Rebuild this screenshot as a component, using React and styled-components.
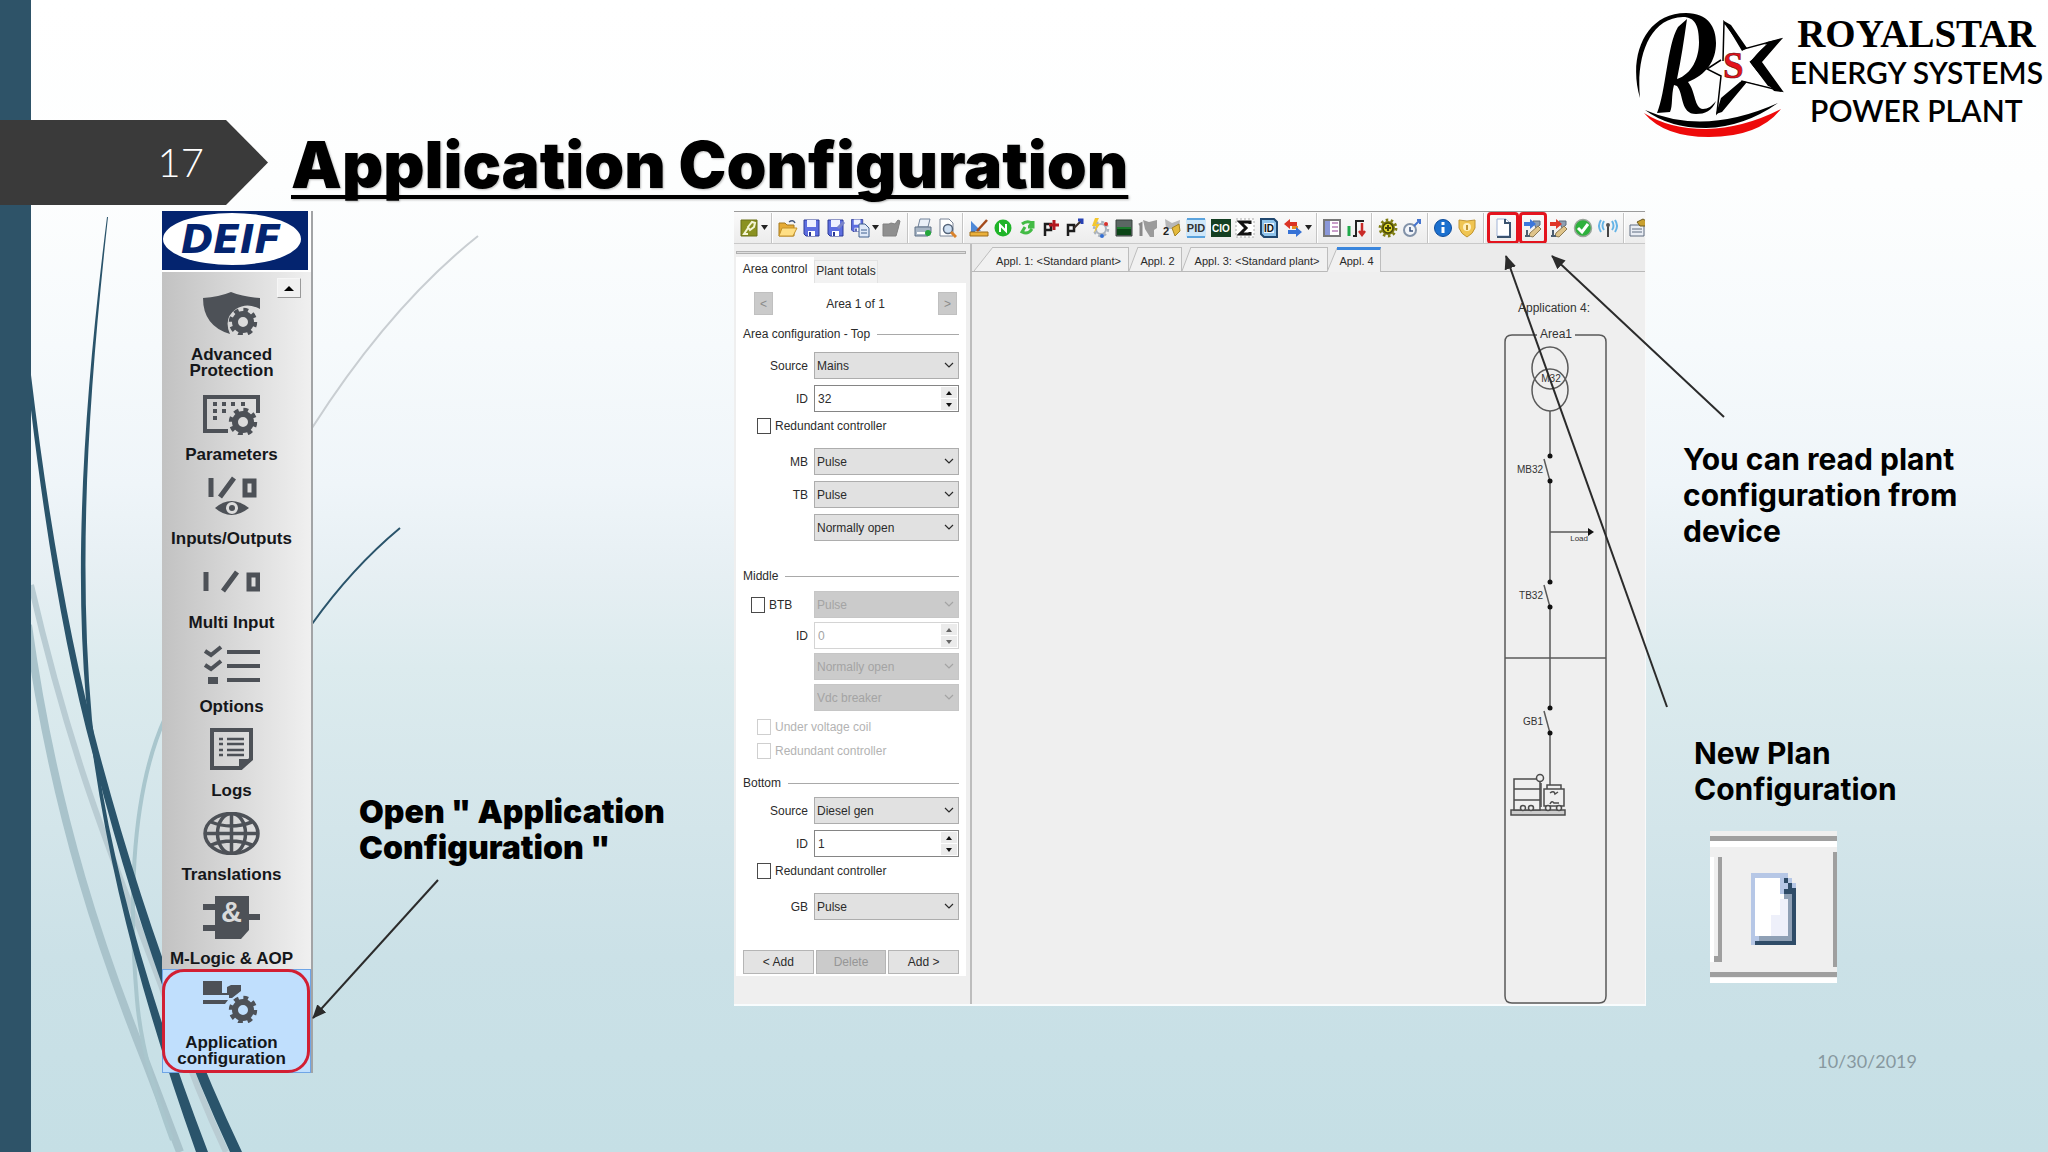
import React from "react";
import styled, { createGlobalStyle } from "styled-components";

const GlobalStyle = createGlobalStyle`
  * { box-sizing: border-box; }
  body { margin: 0; }
  button, input, select { font: inherit; color: inherit; }
`;

const uiFont = `"Liberation Sans", Arial, sans-serif`;
const ink = "#4d5157";

/* ---------- slide ---------- */

const Slide = styled.div`
  position: relative;
  min-height: 100vh;
  overflow: hidden;
  font-family: ${uiFont};
  color: #000;
  background: linear-gradient(
    #ffffff 0%, #fdfefe 16%, #f6fafc 30%, #eff5f9 42%, #e6eff3 50%,
    #dcebee 58%, #d3e5ea 72%, #cbe1e7 83%, #c5dfe5 100%
  );
`;

const Backdrop = styled.svg`
  position: absolute;
  inset: 0;
  width: 100%;
  height: 100%;
`;

const Arrows = styled(Backdrop)`
  z-index: 3;
  pointer-events: none;
`;

const Header = styled.header`
  position: relative;
  display: flex;
  align-items: flex-end;
  min-height: 211px;
  padding-bottom: 6px;
`;

const PageTag = styled.div`
  width: 268px;
  height: 85px;
  padding-right: 64px;
  display: flex;
  align-items: center;
  justify-content: flex-end;
  background: #3a3a3a;
  color: #fff;
  font: 300 40px/85px Lato, sans-serif;
  clip-path: polygon(0 0, 226px 0, 100% 50%, 226px 100%, 0 100%);
`;

const Title = styled.h1`
  margin: 0 0 0 23px;
  font: 900 64px/80px Inter, sans-serif;
  text-decoration: underline;
  text-decoration-thickness: 4px;
  text-decoration-skip-ink: none;
  text-underline-offset: 7px;
  text-shadow: 1px 1px 2px rgba(0, 0, 0, 0.25);
`;

const Brand = styled.div`
  align-self: flex-start;
  margin-left: auto;
  padding: 8px 5px 0 0;
  display: flex;
  align-items: flex-start;
  gap: 6px;
`;

const BrandText = styled.div`
  display: flex;
  flex-direction: column;
  align-items: center;
  padding-top: 7px;
  font: 600 30px/38px Lato, sans-serif;
`;

const BrandName = styled.div`
  font: bold 39px/38px "Liberation Serif", serif;
`;

const Main = styled.main`
  position: relative;
  display: grid;
  grid-template-columns: 151px 421px minmax(0, 1fr) 402px;
  align-items: start;
  padding-left: 162px;
`;

const NoteColumn = styled.div`
  display: flex;
  flex-direction: column;
  align-items: flex-start;
  padding-top: ${(p) => p.$top}px;
`;

const Note = styled.p`
  margin: ${(p) => p.$gap || 0}px 0 0 ${(p) => p.$indent}px;
  max-width: 330px;
  font: ${(p) => (p.$heavy ? "900 32px" : "700 30px")}/36px Inter, sans-serif;
`;

const Figure = styled.svg`
  display: block;
  margin: 24px 0 0 64px;
  width: 127px;
  height: 152px;
`;

const SlideDate = styled.time`
  align-self: flex-end;
  margin: 66px 131px 0 0;
  font: 400 18px/24px Lato, sans-serif;
  color: #87989f;
`;

/* ---------- DEIF sidebar ---------- */

const Sidebar = styled.nav`
  border-right: 2px solid #a2a4a6;
  background: linear-gradient(90deg, #c2c2c2, #d4d4d4 40%, #f0f0f0);
`;

const LogoBar = styled.div`
  height: 61px;
  background: #fff;
  svg { display: block; width: 146px; height: 59px; }
`;

const ItemList = styled.ul`
  position: relative;
  margin: 0;
  padding: 9px 0 0;
  list-style: none;
`;

const ScrollUp = styled.button`
  position: absolute;
  top: 6px;
  right: 10px;
  width: 24px;
  height: 20px;
  padding: 0;
  border: 1px solid #f6f6f6;
  border-right-color: #999;
  border-bottom-color: #999;
  background: #f0f0f0;
  svg { display: block; margin: auto; }
`;

const SideButton = styled.button`
  position: relative;
  display: flex;
  flex-direction: column;
  align-items: center;
  gap: 12px;
  width: 100%;
  padding: 11px 10px ${(p) => (p.$active ? 6 : 2)}px 0;
  border: 0;
  background: ${(p) => (p.$active ? "#c0dffd" : "none")};
  box-shadow: ${(p) => (p.$active ? "inset 0 0 0 1px #6fa5e6" : "none")};
  color: #15171a;
  font-weight: bold;
  font-size: 17px;
  line-height: 16px;
  white-space: pre-line;
  svg { display: block; width: 57px; height: 43px; }
  &::after {
    content: "";
    display: ${(p) => (p.$active ? "block" : "none")};
    position: absolute;
    inset: 0 1px 0 0;
    border: 3px solid #d21f33;
    border-radius: 22px;
  }
`;

function Gear({ x, y, r = 10, fill = ink, hole = 5, teeth = 8 }) {
  const c = 2 * Math.PI * r;
  const step = c / teeth;
  return (
    <g transform={`translate(${x} ${y})`} fill="none" stroke={fill}>
      <circle r={(r + hole) / 2} strokeWidth={r - hole} />
      <circle r={r + 1} strokeWidth={r * 0.4} strokeDasharray={`${(step * (r + 1)) / r / 2} ${(step * (r + 1)) / r / 2}`} />
    </g>
  );
}

const sideIcons = {
  shield: (
    <>
      <path fill={ink} d="M0 6 Q16 5 28 0 Q40 5 57 6 V17 Q44 10 33 17 Q20 26 27 42 Q0 34 0 6Z" />
      <Gear x={40} y={30} r={11} hole={5} />
    </>
  ),
  params: (
    <>
      <path fill="none" stroke={ink} strokeWidth="4" d="M25 39 H2 V5 H55 V21" />
      <path fill={ink} d="M10 10h4v4h-4zM19 10h4v4h-4zM28 10h4v4h-4zM38 10h4v4h-4zM10 17h4v4h-4zM19 17h4v4h-4zM10 24h4v4h-4z" />
      <Gear x={40} y={30} r={11} hole={5} />
    </>
  ),
  ioeye: (
    <>
      <path fill="none" stroke={ink} strokeWidth="5" d="M8 2V21M17 21L31 2M42 5h9v14h-9z" />
      <path fill={ink} d="M12 32Q28 18 46 32Q28 46 12 32Z" />
      <circle cx="29" cy="32" r="4.500" fill={ink} stroke="#dcdcdc" strokeWidth="3" />
    </>
  ),
  io: <path fill="none" stroke={ink} strokeWidth="5" d="M3 12V31M20 31L34 12M46 15h9v14h-9z" />,
  options: (
    <>
      <path fill="none" stroke={ink} strokeWidth="4" d="M24 8H57M24 22H57M24 36H57" />
      <path fill="none" stroke={ink} strokeWidth="4" d="M2 7l6 4L18 3M2 21l6 4L18 17" />
      <path fill={ink} d="M5 33h10v7H5z" />
    </>
  ),
  logs: (
    <>
      <path fill="none" stroke={ink} strokeWidth="4" d="M9 2H48V31L38 40H9Z" />
      <path fill={ink} d="M36 42V31H50Z" />
      <path stroke={ink} strokeWidth="2.500" d="M16 11h4M24 11h17M16 16h4M24 16h17M16 22h4M24 22h17M16 27h4M24 27h17" />
    </>
  ),
  globe: (
    <g fill="none" stroke={ink} strokeWidth="3.500">
      <ellipse cx="28.500" cy="21.500" rx="26.500" ry="20" />
      <ellipse cx="28.500" cy="21.500" rx="14" ry="20" />
      <path d="M28.500 2V41M2 21.500H55M8 10Q28 18 49 10M8 33Q28 25 49 33" />
    </g>
  ),
  logic: (
    <>
      <path fill={ink} d="M12 0H46V34L38 43H12Z" />
      <path stroke={ink} strokeWidth="6" d="M0 11H14M0 32H14M44 21H57" />
      <text x="18" y="26" fill="#dadada" fontFamily="Liberation Sans, sans-serif" fontSize="29" fontWeight="bold">&amp;</text>
    </>
  ),
  app: (
    <>
      <path fill={ink} d="M0 1H19V13H24V7L28 5H38V11L29 18H26V15H0Z M0 20H25L22 24H0Z" />
      <Gear x={40} y={30} r={11} hole={5} />
    </>
  ),
};

const sideItems = [
  ["shield", "Advanced\nProtection"],
  ["params", "Parameters"],
  ["ioeye", "Inputs/Outputs"],
  ["io", "Multi Input"],
  ["options", "Options"],
  ["logs", "Logs"],
  ["globe", "Translations"],
  ["logic", "M-Logic & AOP"],
  ["app", "Application\nconfiguration"],
];

/* ---------- application window ---------- */

const AppWindow = styled.section`
  display: flex;
  flex-direction: column;
  min-width: 0;
  background: #efefef;
  border-bottom: 2px solid #f8fcfd;
  border-right: 1px solid #fafafa;
  font-size: 12px;
  line-height: 16px;
  color: #2b2b2b;
`;

const Toolbar = styled.div`
  display: flex;
  align-items: center;
  justify-content: space-between;
  height: 33px;
  padding: 0 0 0 3px;
  overflow: hidden;
  border-top: 1px solid #9b9b9b;
  border-bottom: 1px solid #c9c9c9;
  background: linear-gradient(#fafafa, #ececec);
  > :last-child { margin-right: -6px; }
`;

const Tool = styled.button`
  flex: none;
  width: ${(p) => p.$w || 24}px;
  height: 32px;
  display: flex;
  align-items: center;
  justify-content: center;
  padding: 0;
  background: none;
  border: ${(p) => (p.$marked ? "3px solid #e3131d" : "0")};
  border-radius: 4px;
  svg { display: block; flex: none; }
`;

const ToolSep = styled.span`
  flex: none;
  width: 7px;
  height: 30px;
  background: linear-gradient(90deg, transparent 3px, #c4c4c4 3px, #c4c4c4 4px, #fff 4px, #fff 5px, transparent 5px);
`;

const WindowBody = styled.div`
  display: grid;
  grid-template-columns: 238px minmax(0, 1fr);
`;

const ControlPane = styled.div`
  padding: 7px 4px 28px 2px;
  border-right: 2px solid #bdbdbd;
`;

const PaneRule = styled.div`
  height: 3px;
  border: 1px solid #b0b0b0;
  background: #ddd;
`;

const PaneTabs = styled.div`
  display: flex;
  align-items: flex-end;
  padding-top: 3px;
`;

const PaneTab = styled.button`
  height: ${(p) => (p.$on ? 26 : 23)}px;
  padding: 0 0 3px;
  width: ${(p) => (p.$on ? 78 : 64)}px;
  border: ${(p) => (p.$on ? "0" : "1px solid #e2e2e2")};
  border-bottom: 0;
  background: ${(p) => (p.$on ? "#fff" : "#f2f2f2")};
  line-height: 16px;
`;

const Form = styled.form`
  display: flex;
  flex-direction: column;
  background: #fff;
  padding: 9px 7px 2px 7px;
`;

const Pager = styled.div`
  display: flex;
  justify-content: space-between;
  align-items: center;
  padding: 0 2px 0 11px;
`;

const PagerButton = styled.button`
  width: 19px;
  height: 23px;
  padding: 0;
  border: 1px solid #c0c0c0;
  background: #cacaca;
  color: #8b8b8b;
`;

const Fields = styled.fieldset`
  display: flex;
  flex-direction: column;
  gap: ${(p) => p.$gap}px;
  min-width: 0;
  margin: ${(p) => p.$top}px 0 0;
  padding: 0;
  border: 0;
`;

const Legend = styled.div`
  display: flex;
  align-items: center;
  gap: 7px;
  margin-bottom: ${(p) => p.$after || 0}px;
  &::after { content: ""; flex: 1; height: 1px; background: #a9a9a9; }
`;

const Row = styled.div`
  display: grid;
  grid-template-columns: 65px minmax(0, 1fr);
  gap: 6px;
  align-items: center;
`;

const RowLabel = styled.label`
  text-align: right;
`;

const Check = styled.label`
  display: flex;
  align-items: center;
  gap: 4px;
  height: 16px;
  padding-left: ${(p) => p.$indent}px;
  margin-bottom: ${(p) => p.$after || 0}px;
  color: ${(p) => (p.$off ? "#b3b3b3" : "inherit")};
  input {
    appearance: none;
    flex: none;
    width: 14px;
    height: 16px;
    margin: 0;
    border: 1px solid ${(p) => (p.$off ? "#cfcfcf" : "#4a4a4a")};
    background: #fff;
  }
`;

const SelectBox = styled.div`
  position: relative;
  height: 27px;
  color: ${(p) => (p.$off ? "#a4a4a4" : "#2b2b2b")};
  select {
    appearance: none;
    width: 100%;
    height: 100%;
    padding: 0 20px 0 2px;
    border: 1px solid ${(p) => (p.$off ? "#c6c6c6" : "#adadad")};
    border-radius: 0;
    background: ${(p) => (p.$off ? "#cbcbcb" : "#e1e1e1")};
    opacity: 1;
  }
  svg { position: absolute; right: 5px; top: 10px; }
`;

const SpinBox = styled.div`
  display: flex;
  height: 27px;
  padding: 1px;
  border: 1px solid ${(p) => (p.$off ? "#d4d4d4" : "#858585")};
  background: #fff;
  color: ${(p) => (p.$off ? "#a4a4a4" : "#2b2b2b")};
  input { flex: 1; min-width: 0; padding: 0 0 0 2px; border: 0; background: none; }
`;

const SpinButtons = styled.div`
  display: flex;
  flex-direction: column;
  gap: 1px;
  width: 16px;
  button { flex: 1; padding: 0; border: 0; background: #ebebeb; display: grid; place-items: center; }
`;

const Actions = styled.div`
  display: grid;
  grid-template-columns: repeat(3, 1fr);
  gap: 2px;
  margin-top: 30px;
`;

const ActionButton = styled.button`
  height: 24px;
  padding: 0;
  border: 1px solid #b5b5b5;
  background: ${(p) => (p.disabled ? "#cbcbcb" : "#e3e3e3")};
  color: ${(p) => (p.disabled ? "#969696" : "#2b2b2b")};
`;

const Workspace = styled.div`
  display: flex;
  flex-direction: column;
`;

const AppTabs = styled.div`
  display: flex;
  height: 28px;
  padding: 3px 0 0 21px;
  border-bottom: 1px solid #b9b9b9;
  background: #ebebeb;
`;

const AppTab = styled.button`
  position: relative;
  height: ${(p) => (p.$on ? 25 : 24)}px;
  width: ${(p) => p.$w}px;
  margin-right: ${(p) => p.$gap || 0}px;
  padding: ${(p) => (p.$on ? 0 : 2)}px 4px 0 0;
  border: 0;
  border-top: ${(p) => (p.$on ? "3px solid #3a86dd" : "1px solid #bdbdbd")};
  border-right: 1px solid #bdbdbd;
  background: #f1f1f1;
  font-size: 11px;
  line-height: 16px;
  white-space: nowrap;
  span { position: relative; z-index: 1; }
  svg { position: absolute; right: 100%; bottom: 0; }
`;

const Diagram = styled.svg`
  flex: 1;
  align-self: flex-end;
  width: 180px;
`;

function Chevron() {
  return (
    <svg width="10" height="7" fill="none" stroke="currentColor" strokeWidth="1.200"><path d="M1 1l4 4 4-4" /></svg>
  );
}

function SelectRow({ label, id, value, off, children }) {
  return (
    <Row>
      {children || (label ? <RowLabel htmlFor={id}>{label}</RowLabel> : <span />)}
      <SelectBox $off={off}>
        <select id={id} disabled={off} aria-label={label || value}><option>{value}</option></select>
        <Chevron />
      </SelectBox>
    </Row>
  );
}

function SpinRow({ id, value, off }) {
  return (
    <Row>
      <RowLabel htmlFor={id}>ID</RowLabel>
      <SpinBox $off={off}>
        <input id={id} defaultValue={value} disabled={off} />
        <SpinButtons>
          <button type="button" aria-label="Increase" disabled={off}><svg width="6" height="4"><path d="M3 0l3 4H0z" fill={off ? "#666" : "#111"} /></svg></button>
          <button type="button" aria-label="Decrease" disabled={off}><svg width="6" height="4"><path d="M3 4l3-4H0z" fill={off ? "#666" : "#111"} /></svg></button>
        </SpinButtons>
      </SpinBox>
    </Row>
  );
}

function CheckRow({ children, off, indent = 14, after }) {
  return (
    <Check $off={off} $indent={indent} $after={after}>
      <input type="checkbox" disabled={off} />{children}
    </Check>
  );
}

/* toolbar glyphs, drawn on a 20 x 20 grid */
const floppy = (c) => (
  <>
    <path fill={c} stroke="#2c3a96" d="M2 2h15v16H4l-2-2z" />
    <path fill="#eef1ff" d="M5 2h9v7H5z" /><path fill="#fff" d="M6 13h7v5H6z" /><path fill="#2c3a96" d="M7 14h2v4H7z" />
  </>
);
const wrench = (c) => (
  <>
    <path fill="#8ea0b4" stroke="#5d6b7c" d="M10 3h7v4l-4 3z" />
    <path fill={c} d="M1 4h6V1l6 5-6 5V8H1z" />
    <path fill="#dfc48a" stroke="#8d7a52" d="M15 8l3 3-8 8-4-1 1-3z" />
    <path stroke="#4d5d70" strokeWidth="2" d="M2 18h5M4 12v5" />
  </>
);
const tools = {
  key: (<><path fill="#8a9120" stroke="#6a7116" d="M2 2h16v16H2z" /><path fill="none" stroke="#f4f5d4" strokeWidth="2" d="M9 9l4-5 3 1-1 4-4 3zM9 10L5 16h4" /></>),
  folder: (<><path fill="#e6ab35" stroke="#a67a20" d="M1 5h6l2 2h7v11H1z" /><path fill="#ffdf84" stroke="#c4922a" d="M4 10h15l-4 8H1z" /><path fill="none" stroke="#46587c" strokeWidth="1.500" d="M11 4q4-3 6 1" /></>),
  save: floppy("#5d6ee0"),
  saveAs: (<>{floppy("#5d6ee0")}<path stroke="#7a84c9" strokeWidth="3" d="M12 10l6-6" /></>),
  saveAll: (<><g transform="scale(.75)">{floppy("#5d6ee0")}</g><path fill="#dfe9f8" stroke="#40608f" d="M9 6h6l4 4v9H9z" /><path stroke="#40608f" d="M11 12h6M11 15h6" /></>),
  grayFolder: <path fill="#8f8f8f" stroke="#808080" d="M1 6h6l2-1 4 1 3-4 2 1-2 8-2 7H1z" />,
  printer: (<><path fill="#eaf0f8" stroke="#72839a" d="M7 1h10l-2 8H5z" /><path fill="#a8b6c6" stroke="#5f7086" d="M2 9h16v6l-3 3H2z" /><path fill="#fff" d="M4 14h9v2H4z" /><circle cx="15" cy="15" r="3" fill="#24a63b" /></>),
  preview: (<><path fill="#fff" stroke="#7a8597" d="M3 1h9l4 4v13H3z" /><circle cx="11" cy="11" r="4.500" fill="#cfe0f3" stroke="#56657a" strokeWidth="1.500" /><path stroke="#d9822b" strokeWidth="3" d="M14 14l5 5" /></>),
  ruler: (<><path fill="#2f6fca" d="M2 3v13h5z" /><path fill="#4e88d7" d="M2 3l10 10H2z" /><path fill="#eab03b" stroke="#9d6d1d" d="M1 14h18v4H1z" /><path stroke="#a44b1c" strokeWidth="2.500" d="M8 13L18 2" /></>),
  north: (<><circle cx="10" cy="10" r="8.500" fill="#1fb428" /><path fill="none" stroke="#fff" strokeWidth="2" d="M7 14V7l6 6V6" /></>),
  refresh: <path fill="none" stroke="#43bb45" strokeWidth="3" d="M5 6q5-4 10-1l-3 4M15 11q-4 6-10 3l3-5M16 3v6h-5" />,
  pPlus: (<><path fill="none" stroke="#1c1c1c" strokeWidth="2.500" d="M4 18V6h6v6H4" /><path stroke="#b3161d" strokeWidth="3" d="M8 7h10M13 2v10" /></>),
  pPen: (<><path fill="none" stroke="#1c1c1c" strokeWidth="2.500" d="M3 18V7h6v6H3" /><path stroke="#3a2f2a" strokeWidth="2" d="M9 10l7-7" /><path stroke="#2741b4" strokeWidth="3" d="M13 2h4v4" /></>),
  gearFlash: (<><Gear x={11} y={11} r={6} hole={4} fill="#a9b2bd" /><path fill="#f4c72f" d="M5 0L2 8h4l-2 7 6-9H6l3-6z" /><circle cx="16" cy="6" r="2" fill="#d9302b" /><circle cx="12" cy="18" r="2" fill="#336ed2" /></>),
  screen: (<><path fill="#5b6763" stroke="#39423f" d="M2 2h16v16H2z" /><path fill="#0c4517" d="M3 9h14v8H3z" /><path fill="#1b7b2c" d="M3 9h14v2H3z" /></>),
  grayOne: (<><path fill="#9b9b9b" d="M5 2l6 2 8-2v8l-3 2v7h-4l-5-8z" /><path stroke="#8a8a8a" strokeWidth="3" d="M1 7l2-1v12" /></>),
  goldTwo: (<><path fill="#b7b7b7" d="M3 1l7 4 8-3-1 9H4z" /><path fill="#e4b93c" stroke="#a4821f" d="M10 10l7-4 1 7-5 5z" /><text x="1" y="17" fontSize="11" fontWeight="bold" fill="#222">2</text></>),
  sigma: (<><path fill="#fff" stroke="#aaa" strokeDasharray="2" d="M1 1h18v18H1z" /><path fill="none" stroke="#111" strokeWidth="3" d="M15 6V4H5l6 6-6 6h10v-2" /></>),
  arrows: (<><path fill="#db3324" d="M1 6l6-5v3h7v4H7v3z" /><path fill="#e78b23" d="M9 8h6v3H9z" /><path fill="#3672d6" d="M19 14l-6-5v3H5v4h8v3z" /></>),
  panel: (<><path fill="#fff" stroke="#777" strokeWidth="2" d="M2 2h16v16H2z" /><path fill="#8a97d8" d="M3 3h5v14H3z" /><path stroke="#b87fb8" strokeWidth="1.500" d="M10 5h6M10 9h6M10 13h6" /></>),
  flow: (<><path fill="none" stroke="#222" strokeWidth="2" d="M7 18h3V3h8" /><path stroke="#1fa94a" strokeWidth="3" d="M3 18V8" /><path stroke="#c92b28" strokeWidth="2.500" d="M16 5v12M13 13l3 4 3-4" /></>),
  yellowGear: (<><Gear x={10} y={10} r={7} hole={3} fill="#7f7d10" teeth={10} /><circle cx="10" cy="10" r="5" fill="#dcd52a" stroke="#45430a" strokeWidth="1.500" /><path stroke="#45430a" strokeWidth="2" d="M7 10h6M10 7v6" /></>),
  stopwatch: (<><circle cx="8" cy="12" r="6" fill="#f2f5fa" stroke="#8292a8" strokeWidth="2" /><path stroke="#38507a" strokeWidth="1.500" d="M8 9v4h3" /><path fill="none" stroke="#4474cf" strokeWidth="2" d="M12 8l6-6M15 2h3v4" /></>),
  info: (<><circle cx="10" cy="10" r="8.500" fill="#1b70cf" stroke="#0e4c9b" /><path stroke="#fff" strokeWidth="3" d="M10 9v6M10 4v3" /></>),
  shield: (<><path fill="#f0c552" stroke="#c09531" d="M2 2q8 2 16 0v8q-2 6-8 9-6-3-8-9z" /><circle cx="10" cy="9" r="4" fill="#fff0bd" /><path fill="#c09531" d="M9 7h2v5H9z" /></>),
  doc: (<><path fill="#fff" stroke="#9fb2d6" d="M4 1h9l4 4v13H4z" /><path fill="none" stroke="#3b536f" strokeWidth="2" d="M12 1v4h5v14H4" /></>),
  wrenchBlue: wrench("#3c77dc"),
  wrenchRed: wrench("#df3528"),
  ok: (<><circle cx="10" cy="10" r="8.500" fill="#2eb13c" stroke="#9aa59b" strokeWidth="1.500" /><path fill="none" stroke="#fff" strokeWidth="3" d="M5 10l4 4 6-8" /></>),
  antenna: (<><path stroke="#444" strokeWidth="2" d="M10 8v11" /><circle cx="10" cy="7" r="2" fill="#555" /><path fill="none" stroke="#65b4e6" strokeWidth="2" d="M6 3q-3 5 0 9M14 3q3 5 0 9M3 2q-4 6 0 12M17 2q4 6 0 12" /></>),
  props: (<><path fill="#e9edf4" stroke="#5f6c80" d="M1 7h14v11H1z" /><path stroke="#5f6c80" d="M3 11h10M3 14h10" /><path fill="#c9a02f" stroke="#6c5a20" d="M8 4l6-3 5 3v4h-8z" /></>),
  pid: (<><path fill="#cfe7f9" d="M0 1h20v18H0z" /><path stroke="#5ba3dd" strokeWidth="2" d="M1 1h18M1 19h18" /><text x="10" y="14" textAnchor="middle" fontSize="11" fontWeight="bold" fill="#333">PID</text></>),
  cio: (<><path fill="#143f22" d="M0 1h20v18H0z" /><text x="10" y="14" textAnchor="middle" fontSize="10" fontWeight="bold" fill="#fff">CIO</text></>),
  id: (<><path fill="#8fc4ec" stroke="#20476f" strokeWidth="2" d="M2 1h13l3 3v15H5l-3-3z" /><path fill="#eef6fd" d="M5 5h10v10H5z" /><text x="10" y="14" textAnchor="middle" fontSize="10" fontWeight="bold" fill="#111">ID</text></>),
};

const toolRow = [
  "key", "caret", "sep", "folder", "save", "saveAs", "saveAll", "caret", "grayFolder", "sep", "printer", "preview", "sep",
  "ruler", "north", "refresh", "pPlus", "pPen", "gearFlash", "screen", "grayOne", "goldTwo", "pid", "cio", "sigma", "id",
  "arrows", "caret", "sep", "panel", "flow", "sep", "yellowGear", "stopwatch", "sep", "info", "shield", "sep",
  "doc", "wrenchBlue", "wrenchRed", "ok", "antenna", "sep", "props",
];
const marked = { doc: 32, wrenchBlue: 28 };

function ToolItem({ name }) {
  if (name === "sep") return <ToolSep />;
  if (name === "caret") {
    return <Tool $w={7} aria-label="More"><svg width="7" height="5"><path d="M0 0h7L3.500 5z" fill="#222" /></svg></Tool>;
  }
  return (
    <Tool $w={marked[name]} $marked={!!marked[name]} aria-label={name}>
      <svg width="20" height="20" viewBox="0 0 20 20" fill="none">{tools[name]}</svg>
    </Tool>
  );
}

function TabItem({ slope, children, ...rest }) {
  return (
    <AppTab {...rest}>
      <svg width={slope} height="24"><path d={`M0 24L${slope} 0V24Z`} fill="#f1f1f1" /><path d={`M0 24L${slope} 0`} stroke="#bdbdbd" /></svg>
      <span>{children}</span>
    </AppTab>
  );
}

function PlantDiagram() {
  return (
    <Diagram viewBox="1465 272 180 732" preserveAspectRatio="xMaxYMin meet" fontSize="10" fill="#333">
      <text x="1554" y="312" textAnchor="middle" fontSize="12">Application 4:</text>
      <g fill="none" stroke="#5a5a5a" strokeWidth="1.500">
        <path d="M1537 335h-25q-7 0-7 7v654q0 7 7 7h87q7 0 7-7V342q0-7-7-7h-24" />
        <path d="M1505 658h101" />
        <ellipse cx="1550" cy="368" rx="18" ry="21" />
        <ellipse cx="1550" cy="390" rx="18" ry="21" />
        <path d="M1550 411v45M1544 459l6 22v101M1550 532h38M1544 585l6 22v101M1544 711l6 22v53" />
      </g>
      <text x="1556" y="338" textAnchor="middle" fontSize="12">Area1</text>
      <g fill="#111">
        <circle cx="1550" cy="456" r="2.500" /><circle cx="1550" cy="481" r="2.500" />
        <circle cx="1550" cy="582" r="2.500" /><circle cx="1550" cy="607" r="2.500" />
        <circle cx="1550" cy="708" r="2.500" /><circle cx="1550" cy="733" r="2.500" />
        <path d="M1588 528l6 4-6 4z" />
      </g>
      <text x="1551" y="382" textAnchor="middle">M32</text>
      <text x="1543" y="473" textAnchor="end">MB32</text>
      <text x="1588" y="541" textAnchor="end" fontSize="8">Load</text>
      <text x="1543" y="599" textAnchor="end">TB32</text>
      <text x="1543" y="725" textAnchor="end">GB1</text>
      <g fill="#efefef" stroke="#4c4c4c" strokeWidth="1.500">
        <path fill="#ccc" d="M1511 810h54v5h-54z" />
        <path d="M1514 779h26v31h-26zM1514 789h26M1514 800h26" />
        <circle cx="1540" cy="778" r="3.500" />
        <path d="M1541 783v24M1544 789h20v17h-20zM1547 785h14v4h-14z" />
        <circle cx="1523" cy="808" r="2.500" /><circle cx="1531" cy="808" r="2.500" />
        <circle cx="1548" cy="808" r="2.500" /><circle cx="1559" cy="808" r="2.500" />
        <path fill="none" d="M1550 793q4-3 5 1l3-2M1550 804q2-4 4-1h5" />
      </g>
    </Diagram>
  );
}

function RoyalstarMark() {
  return (
    <svg width="150" height="132" viewBox="30 8 150 132" aria-label="Royalstar emblem">
      <path d="M36 98C24 58 40 13 82 13C104 13 112 27 112 43C112 61 102 75 84 82C92 92 90 108 99 109C104 109 108 106 112 101C108 111 101 114 92 114C76 114 80 94 73 86L70 85C67 96 69 106 66 112L53 113C62 92 63 45 74 27L83 19C80 40 77 60 73 79C88 74 95 58 95 42C95 26 91 17 79 17C45 18 32 57 36 98Z" />
      <path fill="none" stroke="#000" strokeWidth="1.500" d="M119 61L120 22L140 49L177 39L157 62L178 91L138 81L113 113L117 76L103 69L117 60" />
      <path d="M120 21L127 25L143 48L138 51ZM177 38L145 62L170 91L178 92L157 62ZM112 114L117 98L136 82L143 82L118 112Z" />
      <path d="M177 39L163 42L146 62L164 86L178 91L157 62Z" />
      <path fill="#fff" d="M140 51L163 44L145 61L163 86L138 80Z" />
      <text x="119" y="78" fill="#e3131d" stroke="#500" strokeWidth=".5" fontFamily="Liberation Serif, serif" fontSize="37" fontWeight="bold">S</text>
      <path d="M41 110Q100 136 174 103Q140 127 102 128Q65 128 41 110Z" />
      <path fill="#ee0a0a" d="M40 113Q65 129 102 129Q140 128 177 109Q155 137 105 137Q60 137 40 113Z" />
    </svg>
  );
}

export default function App() {
  return (
    <Slide>
      <GlobalStyle />
      <Backdrop viewBox="0 0 2048 1152" preserveAspectRatio="none" fill="none">
        <path stroke="#b9ccd3" strokeWidth="6" d="M31 585C75 775 118 870 162 988Q192 1080 226 1152" />
        <path stroke="#a9c3cb" strokeWidth="8" d="M28 625C55 820 105 960 147 1065L180 1152" />
        <path stroke="#a9c6cd" strokeWidth="4" d="M165 718C128 800 130 920 137 1000Q142 1060 172 1140" />
        <path stroke="#c9ced2" strokeWidth="2" d="M312 428Q390 306 478 236" />
        <path fill="#2a546b" d="M107 217C84 400 74 560 86 700C104 860 142 1000 196 1152H208C150 1000 108 860 92 720C78 560 88 400 108 217Z" />
        <path fill="#2a546b" d="M31 410Q56 620 93 755Q150 980 230 1152H242Q160 980 99 752Q58 600 31 375Z" />
        <path stroke="#2a546b" strokeWidth="2" d="M312 624Q352 568 400 528" />
        <path fill="#2e5368" d="M0 0H31V1152H0z" />
      </Backdrop>

      <Header>
        <PageTag>17</PageTag>
        <Title>Application Configuration</Title>
        <Brand>
          <RoyalstarMark />
          <BrandText>
            <BrandName>ROYALSTAR</BrandName>
            <div>ENERGY SYSTEMS</div>
            <div>POWER PLANT</div>
          </BrandText>
        </Brand>
      </Header>

      <Main>
        <Sidebar>
          <LogoBar>
            <svg viewBox="0 0 146 59" aria-label="DEIF">
              <path fill="#04246f" d="M0 0h146v59H0z" />
              <ellipse cx="70" cy="28" rx="69" ry="26" fill="#fff" />
              <text x="69" y="42" textAnchor="middle" fill="#04246f" fontFamily="DejaVu Sans, sans-serif" fontWeight="bold" fontStyle="italic" fontSize="39">DEIF</text>
            </svg>
          </LogoBar>
          <ItemList>
            {sideItems.map(([icon, label]) => (
              <li key={label}>
                <SideButton $active={icon === "app"}>
                  <svg viewBox="0 0 57 43">{sideIcons[icon]}</svg>
                  {label}
                </SideButton>
              </li>
            ))}
            <li>
              <ScrollUp aria-label="Scroll up"><svg width="10" height="5"><path d="M5 0l5 5H0z" /></svg></ScrollUp>
            </li>
          </ItemList>
        </Sidebar>

        <NoteColumn $top={583}>
          <Note $heavy $indent={46}>Open " Application Configuration "</Note>
        </NoteColumn>

        <AppWindow>
          <Toolbar>{toolRow.map((name, i) => <ToolItem key={i} name={name} />)}</Toolbar>
          <WindowBody>
            <ControlPane>
              <PaneRule />
              <PaneTabs>
                <PaneTab $on>Area control</PaneTab>
                <PaneTab>Plant totals</PaneTab>
              </PaneTabs>
              <Form>
                <Pager>
                  <PagerButton type="button">&lt;</PagerButton>
                  <span>Area 1 of 1</span>
                  <PagerButton type="button">&gt;</PagerButton>
                </Pager>
                <Fields $gap={6} $top={11}>
                  <Legend $after={4}>Area configuration - Top</Legend>
                  <SelectRow label="Source" id="top-source" value="Mains" />
                  <SpinRow id="top-id" value="32" />
                  <CheckRow after={8}>Redundant controller</CheckRow>
                  <SelectRow label="MB" id="mb" value="Pulse" />
                  <SelectRow label="TB" id="tb" value="Pulse" />
                  <SelectRow id="tb-state" value="Normally open" />
                </Fields>
                <Fields $gap={4} $top={27}>
                  <Legend $after={3}>Middle</Legend>
                  <SelectRow id="btb" value="Pulse" off>
                    <CheckRow indent={8}>BTB</CheckRow>
                  </SelectRow>
                  <SpinRow id="middle-id" value="0" off />
                  <SelectRow id="btb-state" value="Normally open" off />
                  <SelectRow id="btb-type" value="Vdc breaker" off />
                </Fields>
                <Fields $gap={8} $top={8}>
                  <CheckRow off>Under voltage coil</CheckRow>
                  <CheckRow off>Redundant controller</CheckRow>
                </Fields>
                <Fields $gap={6} $top={16}>
                  <Legend>Bottom</Legend>
                  <SelectRow label="Source" id="bottom-source" value="Diesel gen" />
                  <SpinRow id="bottom-id" value="1" />
                  <CheckRow after={8}>Redundant controller</CheckRow>
                  <SelectRow label="GB" id="gb" value="Pulse" />
                </Fields>
                <Actions>
                  <ActionButton type="button">&lt; Add</ActionButton>
                  <ActionButton type="button" disabled>Delete</ActionButton>
                  <ActionButton type="button">Add &gt;</ActionButton>
                </Actions>
              </Form>
            </ControlPane>
            <Workspace>
              <AppTabs>
                <TabItem $w={136} $gap={9} slope={19}>Appl. 1: &lt;Standard plant&gt;</TabItem>
                <TabItem $w={44} $gap={9} slope={9}>Appl. 2</TabItem>
                <TabItem $w={137} $gap={9} slope={9}>Appl. 3: &lt;Standard plant&gt;</TabItem>
                <TabItem $w={44} $on slope={10}>Appl. 4</TabItem>
              </AppTabs>
              <PlantDiagram />
            </Workspace>
          </WindowBody>
        </AppWindow>

        <NoteColumn $top={230}>
          <Note $indent={37}>You can read plant configuration from device</Note>
          <Note $indent={48} $gap={186}>New Plan<br />Configuration</Note>
          <Figure viewBox="0 0 127 152" shapeRendering="crispEdges" aria-label="New document button">
            <path fill="#efefef" d="M0 0h127v152H0z" />
            <path fill="#fff" d="M0 10h127v6H0zM0 147h127v5H0zM0 26h4v105H0z" />
            <path fill="#9f9f9f" d="M0 5h127v5H0zM0 141h127v5H0zM8 26h4v105H4v-6h4zM123 21h4v115h-4z" />
            <path fill="#b6c7e6" d="M41 42h37v5h4v5h4v62H41z" />
            <path fill="#fff" d="M45 47h25v16h8v42H45z" />
            <path fill="#eef0fa" d="M61 105V84h9V68h8v37z" />
            <path fill="#8fa0b5" d="M74 63h8v47H49v-5h29V68h-4z" />
            <path fill="#2f4c68" d="M74 47h4v5h4v5h4v57H45v-4h37V63h-8v-5h4v-6h-4z" />
          </Figure>
          <SlideDate dateTime="2019-10-30">10/30/2019</SlideDate>
        </NoteColumn>
      </Main>

      <Arrows viewBox="0 0 2048 1152" preserveAspectRatio="none" fill="none" stroke="#2b2b2b" strokeWidth="2">
        <defs>
          <marker id="tip" markerUnits="userSpaceOnUse" markerWidth="14" markerHeight="12" refX="13" refY="6" orient="auto">
            <path d="M0 0L14 6L0 12Z" fill="#2b2b2b" stroke="none" />
          </marker>
        </defs>
        <path markerEnd="url(#tip)" d="M1724 417L1552 256" />
        <path markerEnd="url(#tip)" d="M1667 707L1506 256" />
        <path markerEnd="url(#tip)" d="M438 880L313 1018" />
      </Arrows>
    </Slide>
  );
}
